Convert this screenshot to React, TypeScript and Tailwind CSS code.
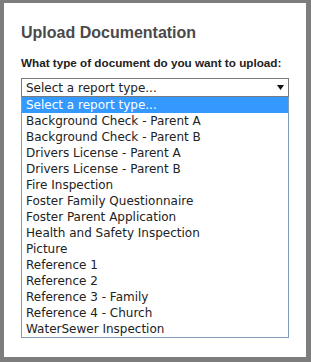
const options = [
  'Background Check - Parent A',
  'Background Check - Parent B',
  'Drivers License - Parent A',
  'Drivers License - Parent B',
  'Fire Inspection',
  'Foster Family Questionnaire',
  'Foster Parent Application',
  'Health and Safety Inspection',
  'Picture',
  'Reference 1',
  'Reference 2',
  'Reference 3 - Family',
  'Reference 4 - Church',
  'WaterSewer Inspection',
];

export default function App() {
  return (
    <div className="w-[311px] h-[362px] bg-[#7d7d7d] pl-[4px] pt-[3px] pr-[5px] pb-[5px]">
      <div className="h-full bg-white px-[17px] pt-[20px]" style={{ fontFamily: '"Liberation Sans", Arial, sans-serif' }}>
        <h2 className="text-[16px] leading-[19px] font-bold text-[#4a4a4a]">Upload Documentation</h2>
        <p className="mt-[14px] text-[11.7px] leading-[14px] font-bold text-[#222]">
          What type of document do you want to upload:
        </p>

        <div className="relative mt-[8px] text-[12px] text-[#222]" style={{ fontFamily: '"DejaVu Sans", Verdana, sans-serif' }}>
          <div className="h-[19px] border border-[#7a7a7a] bg-white flex items-center justify-between pl-[4px] pr-[4px]">
            <span className="leading-[16px]">Select a report type...</span>
            <svg width="7" height="5" viewBox="0 0 7 5">
              <polygon points="0,0 7,0 3.5,5" fill="#111" />
            </svg>
          </div>

          <ul className="absolute left-0 right-0 top-[19px] border border-t-0 border-[#7f9db9] bg-white">
            <li className="h-[16px] leading-[16px] px-[4px] bg-[#3399ff] text-white">Select a report type...</li>
            {options.map((opt) => (
              <li key={opt} className="h-[16px] leading-[16px] px-[4px] whitespace-nowrap">
                {opt}
              </li>
            ))}
          </ul>
        </div>
      </div>
    </div>
  );
}
